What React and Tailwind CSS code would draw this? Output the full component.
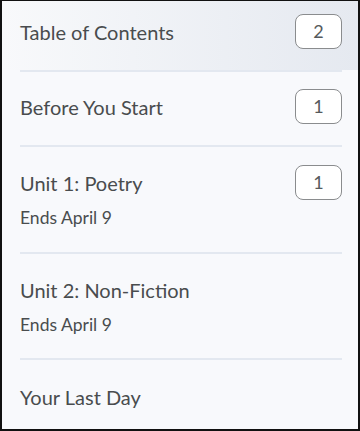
export default function App() {
  return (
    <div
      className="w-[360px] h-[431px] border-t border-l-2 border-r-2 border-b-2 border-[#111] bg-[#f8f9fc] overflow-hidden text-[#494c4e]"
      style={{ fontFamily: "Lato, 'Noto Sans', sans-serif" }}
    >
      {/* Row 1 */}
      <div className="pt-[13px] pb-[21px] flex items-center justify-between pl-[18px] pr-[16px] bg-gradient-to-r from-[#f8f9fb] to-[#e5e9f0]">
        <span className="text-[20px] leading-[24px]">Table of Contents</span>
        <Badge n="2" />
      </div>
      <div className="bg-[#f8f9fc]">
        <Sep />
        <div className="pt-[17px] pb-[21px] flex items-center justify-between pl-[18px] pr-[16px]">
          <span className="text-[20px] leading-[24px]">Before You Start</span>
          <Badge n="1" />
        </div>
        <Sep />
        <div className="pl-[18px] pr-[16px] pt-[18px] pb-[24px]">
          <div className="flex items-center justify-between">
            <span className="text-[20px] leading-[24px]">Unit 1: Poetry</span>
            <Badge n="1" />
          </div>
          <div className="text-[17.5px] leading-[20px] mt-[8px]">Ends April 9</div>
        </div>
        <Sep />
        <div className="pl-[18px] pr-[16px] pt-[24px] pb-[23px]">
          <div className="text-[20px] leading-[24px]">Unit 2: Non-Fiction</div>
          <div className="text-[17.5px] leading-[20px] mt-[13px]">Ends April 9</div>
        </div>
        <Sep />
        <div className="pl-[18px] pr-[16px] pt-[25px]">
          <div className="text-[20px] leading-[24px]">Your Last Day</div>
        </div>
      </div>
    </div>
  );
}

function Sep() {
  return <div className="ml-[18px] mr-[16px] h-[2px] bg-[#e3e8f0]" />;
}

function Badge({ n }) {
  return (
    <div className="w-[47px] h-[35px] rounded-[8px] border-[1.5px] border-[#8a8c8e] bg-white flex items-center justify-center text-[18px] text-[#565a5c]">
      {n}
    </div>
  );
}
